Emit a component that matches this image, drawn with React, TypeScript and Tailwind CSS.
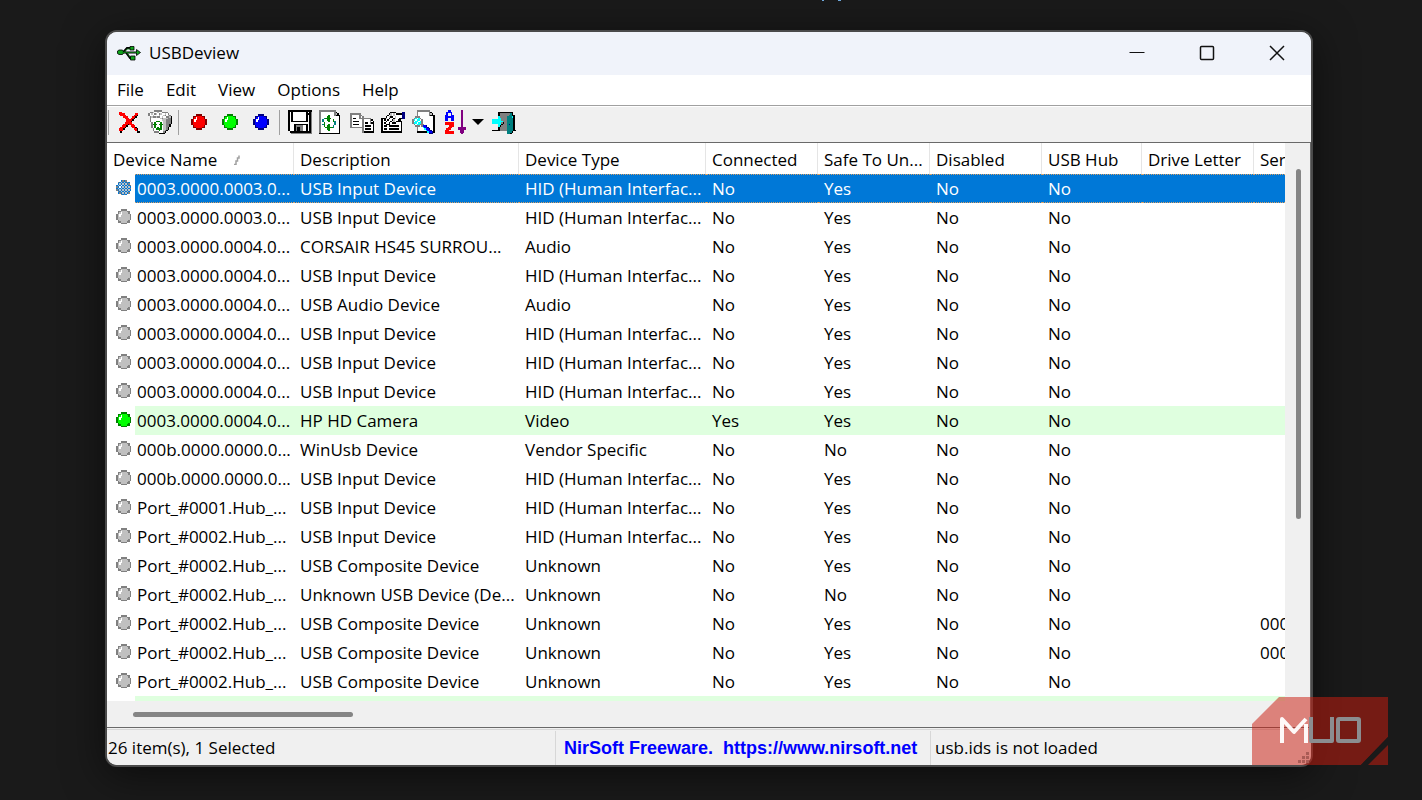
import React from "react";

const PALETTE: Record<string, string> = {
  K: "#000000",
  W: "#ffffff",
  g: "#808080",
  s: "#c0c0c0",
  R: "#ff0000",
  r: "#800000",
  G: "#00ff00",
  n: "#008000",
  B: "#0000ff",
  b: "#000080",
  c: "#00ffff",
  t: "#008080",
  p: "#800080",
  d: "#0078d7",
  l: "#8ebbe0",
};

function PixelArt({ rows, className }: { rows: string[]; className: string }) {
  const width = Math.max(...rows.map((r) => r.length));
  return (
    <svg
      viewBox={`0 0 ${width} ${rows.length}`}
      className={className}
      shapeRendering="crispEdges"
      preserveAspectRatio="none"
      aria-hidden="true"
    >
      {rows.map((row, y) =>
        row
          .split("")
          .map((ch, x) =>
            PALETTE[ch] ? <rect key={`${x}-${y}`} x={x} y={y} width={1} height={1} fill={PALETTE[ch]} /> : null
          )
      )}
    </svg>
  );
}

const BALL = [
  "...oooo...",
  ".oommmmoo.",
  ".omWmmmmo.",
  "omWWmmmmmo",
  "omWmmmmmmo",
  "ommmmmmmmo",
  "ommmmmmmmo",
  ".ommmmmmo.",
  ".oommmmoo.",
  "...oooo...",
];

function ball(edge: string, fill: string) {
  return BALL.map((r) => r.replace(/o/g, edge).replace(/m/g, fill));
}

const SELECTED_BALL = BALL.map((r, y) =>
  r
    .split("")
    .map((ch, x) => (ch === "." ? "." : (x + y) % 2 ? "d" : ch === "o" ? "g" : ch === "W" ? "W" : "s"))
    .join("")
);

const ICONS = {
  remove: [
    "................",
    ".RR.............",
    ".RRRR.......RR..",
    "..RRRR.....RRK..",
    "....RRR...RRK...",
    ".....RRR.RRK....",
    "......RRRRK.....",
    "......RRRK......",
    ".....RRRRR......",
    "....RRRKRRR.....",
    "...RRRK..RRR....",
    "..RRRK....RRK...",
    ".RRRK......RRK..",
    ".RRR........RK..",
    "..K..........KK.",
    "................",
  ],
  recycle: [
    "....ggggg.......",
    ".ggsWWsWWgggg...",
    "gWsWgsWgsWWsWg..",
    "gWWsWWWsWWsgWsg.",
    ".gsggsggWsWWggsK",
    ".gWWWWWWsgsssggK",
    ".gWWWWWWWsssgggK",
    ".gWWWnnnWWssgggK",
    "..gWnWWWnWssgggK",
    "..gnnnWnnnssggK.",
    "..gWnWWWnWssggK.",
    "..gWnWnWnWssgK..",
    "...gWnnnnWssgK..",
    "...gWWWnWWsgK...",
    "....gggWWWgK....",
    ".......KKKK.....",
  ],
  save: [
    "KKKKKKKKKKKKKKKK",
    "KWKWWWWWWWWWKWKg",
    "KWKWWWWWWWWWKKKg",
    "KWKWWWWWWWWWKWKg",
    "KWKWWWWWWWWWKWKg",
    "KWKWWWWWWWWWKWKg",
    "KWKWWWWWWWWWKWKg",
    "KWKKKKKKKKKKKWKg",
    "KWWWWWWWWWWWWWKg",
    "KWWWKKKKKKKKKWKg",
    "KWWWKgggggWWKWKg",
    "KWWWKgKKggWWKWKg",
    "KWWWKgKKggWWKWKg",
    "KWWWKgKKggWWKWKg",
    ".KKKKKKKKKKKKKKg",
    "..gggggggggggggg",
  ],
  refresh: [
    "ggggggggggg.....",
    "gWWWWWWWWWgK....",
    "gWWWWWWWWWgsK...",
    "gWWWWWnWWWgKKK..",
    "gWWWWnnWWWWWWK..",
    "gWWtnnnnWWWWWK..",
    "gWtWWnnWWnWWWK..",
    "gWtWWWnWWntWWK..",
    "gWWnWWWWWWtWWK..",
    "gWtnWWnWWWtWWK..",
    "gWWnWnnWWtWWWK..",
    "gWWWnnnnntWWWK..",
    "gWWWWnnWWWWWWK..",
    "gWWWWWnWWWWWWK..",
    "gWWWWWWWWWWWWK..",
    "KKKKKKKKKKKKKK..",
  ],
  copy: [
    "................",
    "................",
    "ggggggg.........",
    "gWWWWWgg........",
    "gWWWWWgWg.......",
    "gWKKWWgggggggg..",
    "gWWWWWWWgWWWWgK.",
    "gWKKKKWWgWWWWgWK",
    "gWWWWWWWgWKKWgKK",
    "gWKKKKWWgWWWWWWK",
    "gWWWWWWWgWKKKKWK",
    "gggggggggWWWWWWK",
    "........gWKKKKWK",
    "........gWWWWWWK",
    "........gKKKKKKK",
    "................",
  ],
  properties: [
    "................",
    "......KKKK....bb",
    ".....KsWsWKKKKbb",
    "....KWsWsWWWWWbb",
    "...KWsKKWsWWWWbb",
    "KKKsWKWWKsWWKKbb",
    "KWKWKWWKsWWKK...",
    "KWWKWWKWsWKKKK..",
    "KWKWWKWKKKWWWK..",
    "KWWKKKWWWWWWWK..",
    "KWKKWKKKKKKKWK..",
    "KWWWWWWWWWWWWK..",
    "KWKKWKKKKKKKWK..",
    "KWWWWWWWWWWWWK..",
    "KKKKKKKKKKKKKK..",
    "................",
  ],
  find: [
    "...ggggggggg....",
    "...gWWWWWWWgK...",
    "...gWWWWWWWgsK..",
    "...gWWWWWWWgKKK.",
    "..gggWWWWWWWWWK.",
    ".gcWcgWWWWWWWWK.",
    "gcWccWgWWWWWWWK.",
    "gWccWcgWWWWWWWK.",
    "gccWccgWWWWWWWK.",
    ".gWccgggWWWWWWK.",
    "..gggWgBBbWWWWK.",
    "...gWWWcBBbWWWK.",
    "...gWWWWcBBbWWK.",
    "...gWWWWWcBBbWK.",
    "...KKKKKKKcBBbK.",
    "...........bbb..",
  ],
  sort: [
    "...BB.......p...",
    "..BBBB......p...",
    "..B..B......p...",
    ".BB..BB.....p...",
    ".BBBBBB.....p...",
    ".BB..BB.....p...",
    ".BB..BB.....p...",
    "............p...",
    ".RRRRRR.....p...",
    ".RRRRRR.....p...",
    "....RRR.....p...",
    "...RRR....ppppp.",
    "..RRR.....ppppp.",
    ".RRR.......ppp..",
    ".RRRRRR....ppp..",
    ".RRRRRR.....p...",
  ],
  exit: [
    "................",
    "....KKKKKKKKKK..",
    "....KgggggggtK..",
    "....KggggggttKK.",
    "....cgggggtttcK.",
    "....ccggggttttK.",
    "ccccccggggttttK.",
    "cccccccgggttttK.",
    "ccccccgKggttttK.",
    "....ccKgggtbttK.",
    "....cKggggttttK.",
    "....KgggggttttK.",
    "....KgggggttttK.",
    "KKKKKgggggttttKK",
    "..........tttK..",
    "..........ttK...",
  ],
};

const toolbarGroups: { label: string; art: string[]; round?: boolean }[][] = [
  [
    { label: "Uninstall device", art: ICONS.remove },
    { label: "Recycle", art: ICONS.recycle },
  ],
  [
    { label: "Disconnect", art: ball("r", "R"), round: true },
    { label: "Enable", art: ball("n", "G"), round: true },
    { label: "Disable", art: ball("b", "B"), round: true },
  ],
  [
    { label: "Save", art: ICONS.save },
    { label: "Refresh", art: ICONS.refresh },
    { label: "Copy", art: ICONS.copy },
    { label: "Properties", art: ICONS.properties },
    { label: "Find", art: ICONS.find },
    { label: "Sort", art: ICONS.sort },
  ],
];

const menus = ["File", "Edit", "View", "Options", "Help"];
const columns = [
  "Device Name",
  "Description",
  "Device Type",
  "Connected",
  "Safe To Un...",
  "Disabled",
  "USB Hub",
  "Drive Letter",
  "Ser",
];

const HID = "HID (Human Interfac...";
type Device = [name: string, description: string, type: string, connected: string, safe: string, serial?: string];

const devices: Device[] = [
  ["0003.0000.0003.0...", "USB Input Device", HID, "No", "Yes"],
  ["0003.0000.0003.0...", "USB Input Device", HID, "No", "Yes"],
  ["0003.0000.0004.0...", "CORSAIR HS45 SURROU...", "Audio", "No", "Yes"],
  ["0003.0000.0004.0...", "USB Input Device", HID, "No", "Yes"],
  ["0003.0000.0004.0...", "USB Audio Device", "Audio", "No", "Yes"],
  ["0003.0000.0004.0...", "USB Input Device", HID, "No", "Yes"],
  ["0003.0000.0004.0...", "USB Input Device", HID, "No", "Yes"],
  ["0003.0000.0004.0...", "USB Input Device", HID, "No", "Yes"],
  ["0003.0000.0004.0...", "HP HD Camera", "Video", "Yes", "Yes"],
  ["000b.0000.0000.0...", "WinUsb Device", "Vendor Specific", "No", "No"],
  ["000b.0000.0000.0...", "USB Input Device", HID, "No", "Yes"],
  ["Port_#0001.Hub_...", "USB Input Device", HID, "No", "Yes"],
  ["Port_#0002.Hub_...", "USB Input Device", HID, "No", "Yes"],
  ["Port_#0002.Hub_...", "USB Composite Device", "Unknown", "No", "Yes"],
  ["Port_#0002.Hub_...", "Unknown USB Device (De...", "Unknown", "No", "No"],
  ["Port_#0002.Hub_...", "USB Composite Device", "Unknown", "No", "Yes", "000"],
  ["Port_#0002.Hub_...", "USB Composite Device", "Unknown", "No", "Yes", "000"],
  ["Port_#0002.Hub_...", "USB Composite Device", "Unknown", "No", "Yes"],
];

function UsbIcon() {
  return (
    <svg viewBox="0 0 24 16" className="h-4 w-6" aria-hidden="true">
      <g fill="none" stroke="#000" strokeWidth="2">
        <path d="M3 7.500H21M6 7.500L10 3H14M9 7.500L13 13H15" />
      </g>
      <g fill="#0fa51c" stroke="#000" strokeWidth="0.8">
        <path d="M0.500 6L2 5H5.500L7 7.500L5.500 9.500H2L0.500 8.500Z" />
        <path d="M19.500 4.500L23.500 7.500L19.500 10.500Z" />
        <path d="M13 1.500H17V5H13Z" />
        <path d="M13.500 11H18V15H13.500Z" />
      </g>
      <path d="M5 7.500H20M7 7.500L10 4H13M10 7.500L13 12" fill="none" stroke="#0c7d16" strokeWidth="0.8" />
    </svg>
  );
}

function TitleBar() {
  return (
    <header className="flex h-[43px] items-start bg-[#f0f3fa] pl-[10px]">
      <div className="flex h-[41px] flex-1 items-center">
        <UsbIcon />
        <h1 className="ml-2 text-[17px] leading-6">USBDeview</h1>
      </div>
      <button aria-label="Minimize" className="flex h-[41px] w-[70px] items-center justify-center">
        <svg viewBox="0 0 16 16" className="size-4" aria-hidden="true">
          <path d="M0.500 7.500H15.500" stroke="#111" fill="none" />
        </svg>
      </button>
      <button aria-label="Maximize" className="flex h-[41px] w-[70px] items-center justify-center">
        <svg viewBox="0 0 16 16" className="size-4" aria-hidden="true">
          <rect x="1.500" y="1.500" width="13" height="13" rx="1" stroke="#111" strokeWidth="1.500" fill="none" />
        </svg>
      </button>
      <button aria-label="Close" className="mr-[-1px] flex h-[41px] w-[70px] items-center justify-center">
        <svg viewBox="0 0 16 16" className="size-4" aria-hidden="true">
          <path d="M1 1L15 15M15 1L1 15" stroke="#111" strokeWidth="1.500" fill="none" />
        </svg>
      </button>
    </header>
  );
}

function Toolbar() {
  return (
    <div
      role="toolbar"
      aria-label="Device actions"
      className="flex h-[36px] items-start border-b border-[#696969] bg-[#f0f0f0] pl-px"
    >
      {toolbarGroups.map((group, i) => (
        <div key={i} className="flex">
          <div className="mt-[3px] mr-1 h-[25px] w-px bg-[#a0a0a0]" />
          {group.map((item) => (
            <button
              key={item.label}
              aria-label={item.label}
              className="flex h-[30px] w-[31px] items-center justify-center"
            >
              <PixelArt rows={item.art} className={item.round ? "size-4" : "size-6"} />
            </button>
          ))}
          <div className="w-[3px]" />
        </div>
      ))}
      <button aria-label="Sort options" className="-ml-1 flex h-[30px] w-[18px] items-center justify-center">
        <svg viewBox="0 0 12 6" className="h-[6px] w-3" aria-hidden="true">
          <path d="M0 0H12L6 6Z" />
        </svg>
      </button>
      <button aria-label="Exit" className="ml-px flex h-[30px] w-[31px] items-center justify-center">
        <PixelArt rows={ICONS.exit} className="size-6" />
      </button>
    </div>
  );
}

function DeviceTable() {
  return (
    <table className="w-full table-fixed border-separate border-spacing-0 text-left text-[17px] leading-[27px] whitespace-nowrap">
      <colgroup>
        <col className="w-[28px]" />
        <col className="w-[159px]" />
        <col className="w-[225px]" />
        <col className="w-[187px]" />
        <col className="w-[112px]" />
        <col className="w-[112px]" />
        <col className="w-[112px]" />
        <col className="w-[100px]" />
        <col className="w-[112px]" />
        <col />
      </colgroup>
      <thead>
        <tr className="h-[31px]">
          {columns.map((name, i) => (
            <th
              key={name}
              colSpan={i === 0 ? 2 : 1}
              className="overflow-hidden border-r border-[#e5e5e5] p-0 pt-[2px] pl-[6px] font-normal last:border-r-0"
            >
              {i === 0 ? (
                <span className="flex items-center gap-4">
                  {name}
                  <svg viewBox="0 0 8 10" className="h-[10px] w-2" aria-hidden="true">
                    <path d="M1 9.500H3V6H4.500V3H6V0.500" fill="none" stroke="#a0a0a0" strokeWidth="1.500" />
                  </svg>
                </span>
              ) : (
                name
              )}
            </th>
          ))}
        </tr>
      </thead>
      <tbody>
        {devices.map(([name, description, type, connected, safe, serial], i) => {
          const selected = i === 0;
          const tone = selected
            ? "bg-[#0078d7] text-white border-y border-dotted border-[#d9a066]"
            : connected === "Yes"
              ? "bg-[#dfffdf]"
              : "";
          const art = selected ? SELECTED_BALL : connected === "Yes" ? ball("n", "G") : ball("g", "s");
          return (
            <tr key={i} className="h-[29px]">
              <td className="p-0 pl-[9px]">
                <PixelArt rows={art} className="mb-[2px] block size-[15px]" />
              </td>
              {[name, description, type, connected, safe, "No", "No", "", serial ?? ""].map((value, j) => (
                <td key={j} className={`overflow-hidden p-0 ${j === 0 ? "pl-[2px]" : "pl-[6px]"} ${tone}`}>
                  {value}
                </td>
              ))}
            </tr>
          );
        })}
        <tr className="h-[5px]">
          <td className="p-0" />
          <td colSpan={9} className="bg-[#dfffdf] p-0" />
        </tr>
      </tbody>
    </table>
  );
}

function StatusBar() {
  return (
    <footer className="flex h-[38px] border-t border-[#696969] bg-[#f0f0f0] pt-px text-[17px] leading-6">
      <div className="flex w-full border-t border-[#d7d7d7] pt-px">
        <div className="flex w-[449px] items-center border-r border-[#d7d7d7] pl-px">26 item(s), 1 Selected</div>
        <div className="flex w-[375px] items-center border-r border-[#d7d7d7] pl-2">
          <a
            href="https://www.nirsoft.net"
            className="font-['Liberation_Sans',sans-serif] text-[18px] font-bold whitespace-pre text-[#0000ff]"
          >
            {"NirSoft Freeware.  https://www.nirsoft.net"}
          </a>
        </div>
        <div className="flex flex-1 items-center pl-1">usb.ids is not loaded</div>
      </div>
    </footer>
  );
}

function Watermark() {
  return (
    <svg viewBox="0 0 136 68" className="absolute right-[34px] bottom-[35px] h-[68px] w-[136px]" aria-label="MUO">
      <path d="M27 0H136V40L109 68H0V27Z" fill="#c91d10" fillOpacity="0.52" />
      <path d="M136 40V48L116 68H109Z" fill="#1a1a1a" />
      <path d="M136 48V68H116Z" fill="#c91d10" fillOpacity="0.52" />
      <g fill="#a95b55">
        <path d="M54 55h3v3h-3zM50 59h3v3h-3zM54 59h3v3h-3zM46 63h3v3h-3zM50 63h3v3h-3zM54 63h3v3h-3z" />
      </g>
      <g fill="none" stroke="#fff" strokeOpacity="0.95" strokeWidth="4" strokeLinejoin="round">
        <path d="M30 46V22L42 35L54 22M54 27V46" />
      </g>
      <g fill="none" stroke="#8b8d90" strokeWidth="4" strokeLinejoin="round">
        <path d="M59 20V44H80V20" />
        <rect x="86" y="22" width="21" height="22" rx="1" />
      </g>
    </svg>
  );
}

export default function App() {
  return (
    <div className="relative min-h-screen overflow-hidden bg-[#1a1a1a] pt-[30px] pr-[109px] pb-[33px] pl-[105px] font-['Open_Sans','Noto_Sans',sans-serif] text-black">
      <svg viewBox="0 0 20 1" className="absolute top-0 left-[822px] h-px w-5" aria-hidden="true">
        <path d="M0 0h2v1h-2zM16 0h3v1h-3z" fill="#6fa8dc" />
      </svg>
      <main className="overflow-hidden rounded-[12px] border-2 border-[#4a4a4a] bg-[#f0f0f0] shadow-[0_8px_40px_rgba(0,0,0,0.55)]">
        <TitleBar />
        <nav className="flex h-[31px] items-center border-b border-[#a0a0a0] bg-white pl-[10px] text-[17px] leading-6">
          {menus.map((menu) => (
            <button key={menu} className="mr-[22px]">
              {menu}
            </button>
          ))}
        </nav>
        <div className="h-px bg-white" />
        <Toolbar />
        <div className="flex">
          <div className="min-w-0 flex-1">
            <div className="bg-white">
              <DeviceTable />
            </div>
            <div className="h-[26px] px-[26px] pt-[11px]">
              <div className="h-[5px] w-[220px] rounded-full bg-[#858585]" />
            </div>
          </div>
          <div className="w-[26px] border-r border-[#696969] pt-[26px] pl-[11px]">
            <div className="h-[350px] w-[5px] rounded-full bg-[#858585]" />
          </div>
        </div>
        <StatusBar />
      </main>
      <Watermark />
    </div>
  );
}
